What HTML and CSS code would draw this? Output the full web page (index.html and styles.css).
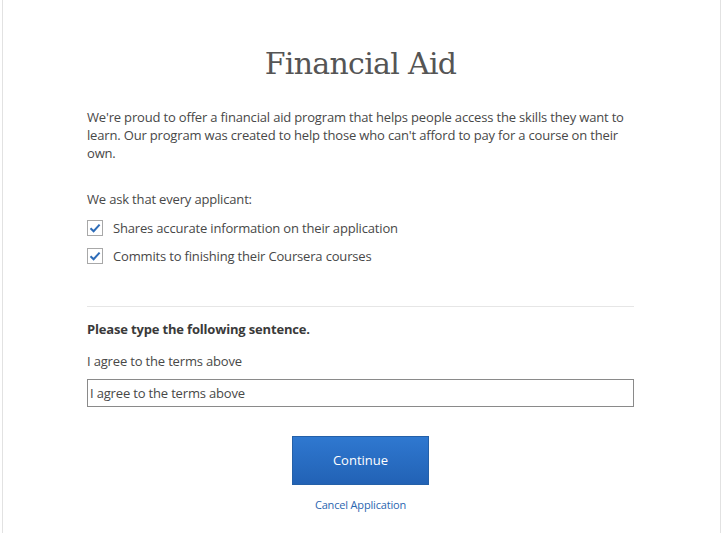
FILE: index.html
```html
<!DOCTYPE html>
<html>
<head>
<meta charset="utf-8">
<link rel="stylesheet" href="styles.css">
</head>
<body>
<div class="card">
  <h1 class="title">Financial Aid</h1>
  <p class="intro">We're proud to offer a financial aid program that helps people access the skills they want to learn. Our program was created to help those who can't afford to pay for a course on their own.</p>
  <p class="ask">We ask that every applicant:</p>
  <ul class="checks">
    <li class="check-row"><span class="box"><svg width="14" height="14" viewBox="0 0 14 14"><path d="M2.5 7.2 L5.6 10.2 L11.6 3.6" fill="none" stroke="#2d6cb8" stroke-width="2"/></svg></span>Shares accurate information on their application</li>
    <li class="check-row"><span class="box"><svg width="14" height="14" viewBox="0 0 14 14"><path d="M2.5 7.2 L5.6 10.2 L11.6 3.6" fill="none" stroke="#2d6cb8" stroke-width="2"/></svg></span>Commits to finishing their Coursera courses</li>
  </ul>
  <hr class="divider">
  <p class="prompt">Please type the following sentence.</p>
  <p class="sentence">I agree to the terms above</p>
  <div class="field">I agree to the terms above</div>
  <div class="actions">
    <button class="btn">Continue</button>
    <a class="cancel" href="#">Cancel Application</a>
  </div>
</div>
</body>
</html>
```
FILE: styles.css
```css
html, body {
  margin: 0;
  padding: 0;
  background: #fff;
}
body {
  font-family: "Open Sans", "Liberation Sans", sans-serif;
  font-size: 13px;
  letter-spacing: -0.17px;
  color: #484848;
}
.card {
  margin-left: 2px;
  width: 719px;
  min-height: 533px;
  box-sizing: border-box;
  border-left: 1px solid #e2e2e2;
  border-right: 1px solid #e2e2e2;
  padding: 42px 86px 0 84px;
}
.title {
  font-family: "DejaVu Serif", "Liberation Serif", serif;
  font-weight: normal;
  font-size: 30px;
  letter-spacing: -0.7px;
  line-height: 44px;
  color: #555;
  text-align: center;
  margin: 0 0 22px;
}
.intro {
  margin: 0;
  line-height: 18px;
}
.ask {
  margin: 28px 0 0;
  line-height: 18px;
}
.checks {
  list-style: none;
  margin: 6px 0 0;
  padding: 0;
}
.check-row {
  display: flex;
  align-items: center;
  height: 28px;
}
.box {
  width: 14px;
  height: 14px;
  border: 1px solid #a8a8a8;
  margin-right: 10px;
  display: flex;
  align-items: center;
  justify-content: center;
}
.divider {
  border: 0;
  border-top: 1px solid #e6e6e6;
  margin: 36px 0 0;
}
.prompt {
  font-weight: bold;
  margin: 13px 0 0;
  line-height: 18px;
  color: #3a3a3a;
}
.sentence {
  margin: 14px 0 0;
  line-height: 18px;
}
.field {
  margin-top: 9px;
  height: 28px;
  box-sizing: border-box;
  border: 1px solid #8a8a8a;
  padding: 0 4px 0 2px;
  line-height: 26px;
}
.actions {
  display: flex;
  flex-direction: column;
  align-items: center;
  margin-top: 29px;
}
.btn {
  width: 137px;
  height: 49px;
  border: 1px solid #2460a8;
  background: linear-gradient(#2f78d0, #2262b5);
  color: #fff;
  font-family: "Open Sans", "Liberation Sans", sans-serif;
  font-size: 13px;
  padding: 0 0 2px;
}
.cancel {
  margin-top: 12px;
  font-size: 11px;
  color: #2b66b0;
  text-decoration: none;
}
```
